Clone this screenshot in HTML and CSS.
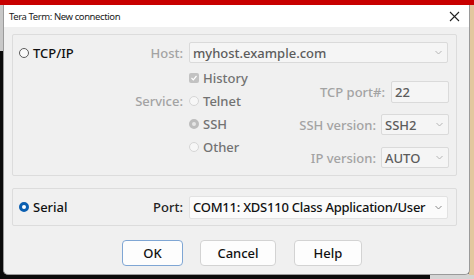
FILE: index.html
```html
<!DOCTYPE html>
<html>
<head>
<meta charset="utf-8">
<link rel="stylesheet" href="styles.css">
</head>
<body>
<div class="topbar"></div>
<div class="dialog">
  <div class="titlebar">
    <span class="title">Tera Term: New connection</span>
    <svg class="close" width="11" height="11" viewBox="0 0 11 11"><path d="M1 1L10 10M10 1L1 10" stroke="#222" stroke-width="1.1" fill="none"/></svg>
  </div>
  <div class="content">
    <div class="group tcp">
      <div class="host-row">
        <div class="lblcell">
          <span class="main-opt"><span class="radio"></span>TCP/IP</span>
          <span class="lbl">Host:</span>
        </div>
        <div class="combo host dis"><span>myhost.example.com</span><svg class="chev" width="7" height="5" viewBox="0 0 7 5"><path d="M0.5 1L3.5 4L6.5 1" stroke="#b5b5b5" fill="none"/></svg></div>
      </div>
      <div class="lower">
        <div class="svc">
          <span class="lbl"></span>
          <span class="opt"><span class="check"><svg width="8" height="8" viewBox="0 0 8 8"><path d="M1.5 4L3.3 5.8L6.5 2" stroke="#fff" stroke-width="1.2" fill="none"/></svg></span>History</span>
          <span class="lbl">Service:</span>
          <span class="opt"><span class="radio dis"></span>Telnet</span>
          <span class="lbl"></span>
          <span class="opt"><span class="radio dis on"></span>SSH</span>
          <span class="lbl"></span>
          <span class="opt"><span class="radio dis"></span>Other</span>
        </div>
        <div class="right">
          <div class="rrow port"><span class="lbl">TCP port#:</span><div class="input dis">22</div></div>
          <div class="rrow ver"><span class="lbl">SSH version:</span><div class="combo small dis"><span>SSH2</span><svg class="chev" width="7" height="5" viewBox="0 0 7 5"><path d="M0.5 1L3.5 4L6.5 1" stroke="#b5b5b5" fill="none"/></svg></div></div>
          <div class="rrow ip"><span class="lbl">IP version:</span><div class="combo small dis"><span>AUTO</span><svg class="chev" width="7" height="5" viewBox="0 0 7 5"><path d="M0.5 1L3.5 4L6.5 1" stroke="#b5b5b5" fill="none"/></svg></div></div>
        </div>
      </div>
    </div>
    <div class="group serial">
      <div class="lblcell">
        <span class="main-opt"><span class="radio sel"></span>Serial</span>
        <span class="lbl en">Port:</span>
      </div>
      <div class="combo host en"><span class="port-text">COM11: XDS110 Class Application/User</span><svg class="chev" width="7" height="5" viewBox="0 0 7 5"><path d="M0.5 1L3.5 4L6.5 1" stroke="#888" fill="none"/></svg></div>
    </div>
    <div class="buttons">
      <button class="btn ok">OK</button>
      <button class="btn cancel">Cancel</button>
      <button class="btn help">Help</button>
    </div>
  </div>
</div>
</body>
</html>
```
FILE: styles.css
```css
* { box-sizing: border-box; }
html, body { margin: 0; padding: 0; }
body {
  width: 474px;
  height: 279px;
  overflow: hidden;
  font-family: "Noto Sans", "Open Sans", sans-serif;
  font-weight: 500;
  background:
    linear-gradient(#c8c8c8, #c8c8c8) 0 5px / 3px 46px no-repeat,
    linear-gradient(#e2c79e, #e2c79e) 469px 5px / 5px 270px no-repeat,
    linear-gradient(#d4d4d4, #d4d4d4) 430px 274px / 44px 5px no-repeat,
    #0a0a0a;
}
.topbar {
  height: 5px;
  background: #c80000;
}
.dialog {
  margin-left: 3px;
  width: 467px;
  height: 270px;
  background: #f0f0f0;
  border: 1px solid #9a9a9a;
  border-top: none;
  border-radius: 0 0 5px 5px;
  display: flex;
  flex-direction: column;
}
.titlebar {
  height: 22px;
  background: #ffffff;
  display: flex;
  align-items: center;
  justify-content: space-between;
  padding: 0 9px 0 5px;
}
.title {
  font-size: 9.5px;
  font-weight: 400;
  color: #1a1a1a;
  letter-spacing: -0.4px;
}
.close { display: block; }
.content {
  padding: 7px 12px 0 8px;
  display: flex;
  flex-direction: column;
}
.group {
  border: 1px solid #dcdcdc;
  border-radius: 2px;
}
.tcp {
  height: 142px;
  padding: 7px 7px 0 0;
}
.host-row, .serial {
  display: flex;
  align-items: center;
}
.lblcell {
  width: 170px;
  display: flex;
  align-items: center;
  justify-content: space-between;
  padding-left: 6px;
  margin-right: 6px;
}
.main-opt {
  display: flex;
  align-items: center;
  font-size: 13px;
  color: #111;
  gap: 4px;
}
.lbl {
  font-size: 13px;
  color: #a3a3a3;
}
.lbl.en { color: #222; }
.radio {
  width: 10px;
  height: 10px;
  border-radius: 50%;
  border: 1px solid #5c5c5c;
  background: #fafafa;
  flex: none;
}
.radio.sel {
  border: 3px solid #0a5eb0;
  background: #fff;
}
.radio.dis {
  border: 1px solid #d6d6d6;
  background: #f7f7f7;
}
.radio.dis.on {
  border: 3px solid #bdbdbd;
  background: #e6e6e6;
}
.combo, .input {
  height: 21px;
  border: 1px solid #dadada;
  border-radius: 2px;
  font-size: 13px;
  display: flex;
  align-items: center;
  padding-left: 3px;
}
.combo { justify-content: space-between; padding-right: 5px; }
.combo.host { width: 259px; }
.combo.dis, .input.dis { background: #f5f5f5; color: #5c5c5c; }
.combo.en { background: #fbfbfb; color: #111; border-color: #e2e2e2; height: 23px; }
.port-text { letter-spacing: -0.25px; white-space: nowrap; }
.chev { display: block; flex: none; }
.lower {
  display: flex;
  margin-top: 3px;
}
.svc {
  display: grid;
  grid-template-columns: 170px auto;
  grid-auto-rows: 23px;
  column-gap: 6px;
  align-items: center;
  justify-items: end;
}
.svc .opt {
  justify-self: start;
  display: flex;
  align-items: center;
  gap: 4px;
  font-size: 13px;
  color: #727272;
}
.check {
  width: 10px;
  height: 10px;
  border-radius: 2px;
  background: #c2c2c2;
  display: flex;
  align-items: center;
  justify-content: center;
}
.check svg { display: block; }
.right {
  flex: 1;
  display: flex;
  flex-direction: column;
  align-items: flex-end;
}
.rrow {
  display: flex;
  align-items: center;
}
.port { margin-top: 15px; gap: 6px; }
.port .input { width: 58px; height: 22px; }
.ver { margin-top: 11px; gap: 5px; }
.ip { margin-top: 12px; gap: 5px; }
.combo.small { width: 68px; }
.serial {
  margin-top: 12px;
  height: 38px;
  padding-top: 0;
}
.buttons {
  display: flex;
  gap: 17px;
  margin-top: 14px;
  padding-left: 110px;
}
.btn {
  height: 26px;
  border: 1px solid #d3d3d3;
  border-radius: 4px;
  background: #fdfdfd;
  font-family: "Noto Sans", sans-serif;
  font-weight: 500;
  font-size: 13px;
  color: #111;
  padding: 0;
}
.ok { width: 61px; border-color: #7fa6d4; }
.cancel { width: 76px; }
.help { width: 68px; margin-left: 1px; }
```
